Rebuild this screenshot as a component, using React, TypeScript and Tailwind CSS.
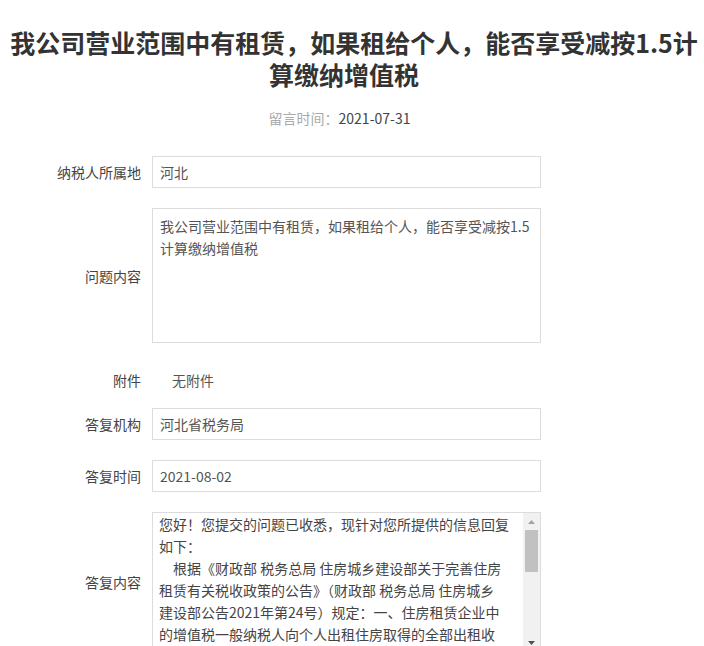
import React from "react";

const font = { fontFamily: '"Noto Sans CJK SC", "Noto Sans", sans-serif' };

function Label({ children }: { children: React.ReactNode }) {
  return (
    <div className="w-[141px] shrink-0 text-right text-[14px] leading-[22px] text-[#444]">
      {children}
    </div>
  );
}

function InputRow({ label, value }: { label: string; value: string }) {
  return (
    <div className="flex items-center">
      <Label>{label}</Label>
      <div className="ml-[11px] flex h-[32px] w-[389px] items-center border border-[#dcdcdc] bg-white pl-[7px] text-[14px] text-[#555]">
        {value}
      </div>
    </div>
  );
}

const question = [
  "我公司营业范围中有租赁，如果租给个人，能否享受减按1.5",
  "计算缴纳增值税",
];

const reply = [
  "您好！您提交的问题已收悉，现针对您所提供的信息回复",
  "如下：",
  "\u3000根据《财政部 税务总局 住房城乡建设部关于完善住房",
  "租赁有关税收政策的公告》（财政部 税务总局 住房城乡",
  "建设部公告2021年第24号）规定：一、住房租赁企业中",
  "的增值税一般纳税人向个人出租住房取得的全部出租收",
];

function ScrollBar() {
  return (
    <div className="flex w-[17px] shrink-0 flex-col bg-[#f1f1f1]">
      <div className="flex h-[17px] items-center justify-center">
        <svg width="7" height="4" viewBox="0 0 7 4">
          <path d="M0 4 L3.5 0 L7 4 Z" fill="#a3a3a3" />
        </svg>
      </div>
      <div className="mx-[2px] h-[42px] bg-[#c1c1c1]" />
      <div className="flex-1" />
      <div className="flex h-[17px] items-center justify-center">
        <svg width="7" height="4" viewBox="0 0 7 4">
          <path d="M0 0 L7 0 L3.5 4 Z" fill="#505050" />
        </svg>
      </div>
    </div>
  );
}

export default function App() {
  return (
    <div className="h-[646px] w-[704px] overflow-hidden bg-white" style={font}>
      {/* Heading */}
      <h1 className="pt-[26px] text-center text-[25px] font-bold leading-[32px] whitespace-nowrap text-[#333]">
        <span className="inline-block pl-[4px]">我公司营业范围中有租赁，如果租给个人，能否享受减按1.5计</span>
        <br />
        <span className="inline-block pr-[16px]">算缴纳增值税</span>
      </h1>
      <div className="mt-[18px] pr-[25px] text-center text-[14px] leading-[20px]">
        <span className="text-[#aaa]">留言时间：</span>
        <span className="text-[#444]">2021-07-31</span>
      </div>

      {/* Detail form */}
      <div className="mt-[28px] flex flex-col">
        <InputRow label="纳税人所属地" value="河北" />

        <div className="mt-[20px] flex items-center">
          <Label>问题内容</Label>
          <div className="ml-[11px] h-[135px] w-[389px] border border-[#dcdcdc] px-[7px] pt-[6px] text-[14px] leading-[22px] text-[#555]">
            {question.map((line) => (
              <div key={line} className="whitespace-nowrap">
                {line}
              </div>
            ))}
          </div>
        </div>

        <div className="mt-[26px] flex items-center">
          <Label>附件</Label>
          <div className="ml-[31px] text-[14px] leading-[22px] text-[#555]">无附件</div>
        </div>

        <div className="mt-[17px]">
          <InputRow label="答复机构" value="河北省税务局" />
        </div>
        <div className="mt-[20px]">
          <InputRow label="答复时间" value="2021-08-02" />
        </div>

        <div className="mt-[20px] flex items-center">
          <Label>答复内容</Label>
          <div className="ml-[11px] flex h-[140px] w-[389px] border border-[#dcdcdc]">
            <div className="flex-1 overflow-hidden pl-[6px] text-[14px] leading-[22px] text-[#444]">
              {reply.map((line) => (
                <div key={line} className="whitespace-pre">
                  {line}
                </div>
              ))}
            </div>
            <ScrollBar />
          </div>
        </div>
      </div>
    </div>
  );
}
